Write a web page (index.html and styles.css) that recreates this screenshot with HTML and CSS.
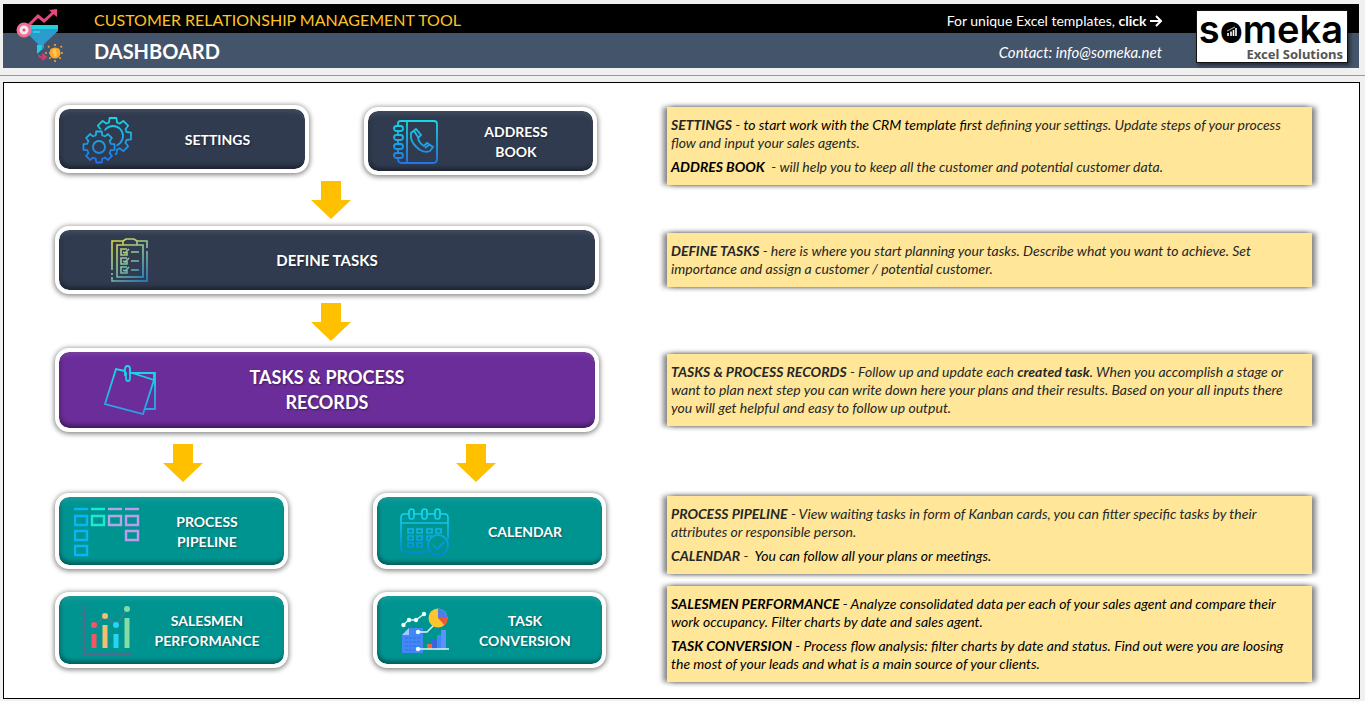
FILE: index.html
```html
<!DOCTYPE html>
<html lang="en">
<head>
<meta charset="utf-8">
<meta name="viewport" content="width=device-width, initial-scale=1">
<title>Customer Relationship Management Tool - Dashboard</title>
<link rel="stylesheet" href="styles.css">
</head>
<body>
<header class="banner">
  <div class="emblem">
    <svg width="50" height="54" viewBox="0 0 50 54" aria-hidden="true">
      <path d="M13 16L22 7l6 5 10-9" fill="none" stroke="#e5487a" stroke-width="3"/>
      <path d="M33 1l8-1 0 8z" fill="#e5487a"/>
      <path d="M9 17h33v5L28 35v4l-6 5V35L9 22z" fill="#2b9ccb"/>
      <path d="M9 16h33v4H9z" fill="#22cfdc"/>
      <path d="M21 36h5v4l-5 5z" fill="#22cfdc"/>
      <path d="M17 23h7" stroke="#22cfdc" stroke-width="2"/>
      <circle cx="8" cy="21" r="6" fill="#f3e6ef" stroke="#ef6f94" stroke-width="3"/>
      <circle cx="8" cy="21" r="1.5" fill="#e5487a"/>
      <path d="M23 46q0 3 5 2m-2-3l4 3-4 3" fill="none" stroke="#d83a70" stroke-width="2"/>
      <g stroke="#f5a43a" stroke-width="1.600" stroke-dasharray="2 2"><path d="M39 35v19M29 44h20M32 37l14 14M46 37L32 51"/></g>
      <circle cx="39" cy="44" r="5.500" fill="#ffa733"/>
      <path d="M40 41.500h-2v2.500h2v2.500h-2" fill="none" stroke="#ffd94f" stroke-width="1.300"/>
    </svg>
  </div>
  <p class="product">CUSTOMER RELATIONSHIP MANAGEMENT TOOL</p>
  <h1 class="title">DASHBOARD</h1>
  <p class="promo">For unique Excel templates, <a href="#templates">click
    <svg width="12" height="12" viewBox="0 0 12 12" aria-hidden="true"><path d="M0 6h11M6 1l5 5-5 5" fill="none" stroke="#fff" stroke-width="2"/></svg></a></p>
  <p class="contact">Contact: <a href="mailto:info@someka.net">info@someka.net</a></p>
  <a class="brand" href="#someka">
    <span class="wordmark">s<span class="ring">o<svg class="bars" viewBox="0 0 18 18" aria-hidden="true"><circle cx="9" cy="9" r="8" fill="#000"/><path d="M5 13v-3M8 13V8.500M10.500 13V7M13 13V5" stroke="#fff" stroke-width="1.600"/><path d="M4 8l8-4" stroke="#fff" stroke-width=".8"/></svg></span>meka</span>
    <span class="tagline">Excel Solutions</span>
  </a>
</header>

<main class="sheet">
  <nav class="flow" aria-label="Process flow">
    <div class="row start">
      <button class="tile navy" type="button">
        <svg class="icon" width="52" height="48" viewBox="-1 -1 52 48" aria-hidden="true">
          <defs>
            <linearGradient id="aqua" gradientUnits="userSpaceOnUse" x1="0" y1="0" x2="0" y2="46"><stop offset="0" stop-color="#19d9e0"/><stop offset="1" stop-color="#2070ea"/></linearGradient>
            <path id="cog" d="M-4.600-11.100L-3.200-11.800-2.800-15.500H2.800L3.200-11.800 4.600-11.100"/>
            <path id="wheel" d="M-5.400-12.900L-4-13.600-3.400-18H3.400L4-13.600 5.400-12.900"/>
            <mask id="gears" maskUnits="userSpaceOnUse" x="-2" y="-2" width="56" height="52">
              <g transform="translate(31 19)" fill="none" stroke="#fff" stroke-width="1.800" stroke-linejoin="round">
                <use href="#wheel"/><use href="#wheel" transform="rotate(45)"/><use href="#wheel" transform="rotate(90)"/><use href="#wheel" transform="rotate(135)"/><use href="#wheel" transform="rotate(180)"/><use href="#wheel" transform="rotate(225)"/><use href="#wheel" transform="rotate(270)"/><use href="#wheel" transform="rotate(315)"/>
                <circle r="10"/>
              </g>
              <circle cx="17" cy="30" r="17.500" fill="#000"/>
              <g transform="translate(17 30)" fill="none" stroke="#fff" stroke-width="1.800" stroke-linejoin="round">
                <use href="#cog"/><use href="#cog" transform="rotate(45)"/><use href="#cog" transform="rotate(90)"/><use href="#cog" transform="rotate(135)"/><use href="#cog" transform="rotate(180)"/><use href="#cog" transform="rotate(225)"/><use href="#cog" transform="rotate(270)"/><use href="#cog" transform="rotate(315)"/>
                <circle r="6"/>
              </g>
            </mask>
          </defs>
          <rect x="-1" y="-1" width="52" height="48" fill="url(#aqua)" mask="url(#gears)"/>
        </svg>
        <span class="label">SETTINGS</span>
      </button>
      <button class="tile navy" type="button">
        <svg class="icon" width="46" height="44" viewBox="0 0 46 44" fill="none" stroke="url(#aqua)" stroke-width="1.800" aria-hidden="true">
          <path d="M5 5V3q0-2 3-2h33q3 0 3 3v35q0 4-4 4H9q-4 0-4-4M14 1v42M5 12v3M5 21v3M5 30v3"/>
          <rect x="1" y="6" width="9" height="5" rx="2.500"/><rect x="1" y="15" width="9" height="5" rx="2.500"/><rect x="1" y="24" width="9" height="5" rx="2.500"/><rect x="1" y="33" width="9" height="5" rx="2.500"/>
          <path d="M18 13l5-4 5 6-3 3q1 5 6 8l3-3 6 4-3 4q-5 2-10-1Q19 24 18 18zM21 11l4 6M32 28l4-3"/>
        </svg>
        <span class="label">ADDRESS<br>BOOK</span>
      </button>
    </div>
    <div class="links first"><svg class="arrow" viewBox="0 0 40 38" aria-hidden="true"><path d="M10 0h20v19h10L20 38 0 19h10z"/></svg></div>
    <button class="tile wide navy" type="button">
      <svg class="icon" width="38" height="44" viewBox="0 0 38 44" fill="none" stroke="url(#meadow)" stroke-width="1.600" aria-hidden="true">
        <defs><linearGradient id="meadow" gradientUnits="userSpaceOnUse" x1="0" y1="0" x2="34" y2="44"><stop offset="0" stop-color="#e5d93b"/><stop offset=".5" stop-color="#8dc6a0"/><stop offset="1" stop-color="#2387d8"/></linearGradient></defs>
        <path d="M12 3H1v29M1 35v2M1 39v4h35V13M36 10V3H26M12 7V3l3-2h8l3 2v4zM12 7H6v32h26V7h-6"/>
        <path d="M16 11h-6v6h6v-3M16 20h-6v6h6v-3M16 29h-6v6h6v-3M12 14l2 1 4-4M12 23l2 1 4-4M12 32l2 1 4-4M20 14h8M20 23h8M20 32h8"/>
      </svg>
      <span class="label">DEFINE TASKS</span>
    </button>
    <div class="links second"><svg class="arrow" viewBox="0 0 40 38" aria-hidden="true"><path d="M10 0h20v19h10L20 38 0 19h10z"/></svg></div>
    <button class="tile wide tall purple" type="button">
      <svg class="icon" width="52" height="50" viewBox="0 0 52 50" fill="none" stroke="url(#paper)" stroke-width="1.800" aria-hidden="true">
        <defs><linearGradient id="paper" gradientUnits="userSpaceOnUse" x1="0" y1="0" x2="0" y2="50"><stop offset="0" stop-color="#14e0e4"/><stop offset="1" stop-color="#2a9be8"/></linearGradient></defs>
        <path d="M21 6L12 4 1 39l38 10 11-34-25-8M26 8h25v36H41M50 15v-7"/>
        <path d="M21 11V4q0-3 2.500-3T26 4v9q0 3-2 3t-2-3V7"/>
      </svg>
      <span class="label">TASKS &amp; PROCESS<br>RECORDS</span>
    </button>
    <div class="links pair">
      <svg class="arrow" viewBox="0 0 40 38" aria-hidden="true"><path d="M10 0h20v19h10L20 38 0 19h10z"/></svg>
      <svg class="arrow" viewBox="0 0 40 38" aria-hidden="true"><path d="M10 0h20v19h10L20 38 0 19h10z"/></svg>
    </div>
    <div class="row outputs">
      <button class="tile teal" type="button">
        <svg class="icon" width="66" height="50" viewBox="0 0 66 50" fill="none" stroke-width="2.400" aria-hidden="true">
          <g stroke="#08b5f5"><path d="M0 2h14"/><path d="M1 9h12v9H1zM1 24h12v9H1zM1 39h12v9H1z"/></g>
          <g stroke="#1fe8d0"><path d="M17 2h14"/><path d="M18 9h12v9H18z"/></g>
          <g stroke="#b3a6e4"><path d="M34 2h14"/><path d="M35 9h12v9H35z"/></g>
          <g stroke="#c09aec"><path d="M51 2h14"/><path d="M52 9h12v9H52zM52 24h12v9H52z"/></g>
        </svg>
        <span class="label">PROCESS<br>PIPELINE</span>
      </button>
      <button class="tile teal" type="button">
        <svg class="icon" width="50" height="48" viewBox="0 0 50 48" fill="none" stroke="url(#sky)" stroke-width="1.700" aria-hidden="true">
          <defs><linearGradient id="sky" gradientUnits="userSpaceOnUse" x1="0" y1="0" x2="0" y2="48"><stop offset="0" stop-color="#16e0f0"/><stop offset="1" stop-color="#0880dc"/></linearGradient></defs>
          <path d="M9 6H4Q1 6 1 10v30q0 4 4 4h23M14 6h8M27 6h8M40 6h5q3 0 3 4v21M1 15h47"/>
          <rect x="9" y="1" width="5" height="10" rx="2.500"/><rect x="22" y="1" width="5" height="10" rx="2.500"/><rect x="35" y="1" width="5" height="10" rx="2.500"/>
          <path d="M8 21h5v4H8zM17 21h5v4h-5zM27 21h5v4h-5zM36 21h5v4h-5zM8 28h5v4H8zM17 28h5v4h-5zM8 35h5v4H8zM17 35h5v4h-5zM29 32h-2v-4h5v1"/>
          <circle cx="38" cy="37" r="10"/><path d="M33 37l4 4 7-7"/>
        </svg>
        <span class="label">CALENDAR</span>
      </button>
      <button class="tile teal" type="button">
        <svg class="icon" width="50" height="52" viewBox="0 0 50 52" fill="none" aria-hidden="true">
          <path d="M2 1v48h48" stroke="#4c6e8c" stroke-width="2.500"/>
          <path d="M12 20l11-9 11 9L45 4" stroke="#54798d" stroke-width="1.200"/>
          <g stroke-width="5"><path d="M12 29v14" stroke="#fb5264"/><path d="M23 20v23" stroke="#f6bd72"/><path d="M34 29v14" stroke="#25d5f8"/><path d="M45 13v30" stroke="#81dda5"/></g>
          <circle cx="12" cy="20" r="3" fill="#fb5264"/><circle cx="23" cy="11" r="3" fill="#f6bd72"/><circle cx="34" cy="20" r="3" fill="#25d5f8"/><circle cx="45" cy="4" r="3" fill="#81dda5"/>
        </svg>
        <span class="label">SALESMEN<br>PERFORMANCE</span>
      </button>
      <button class="tile teal" type="button">
        <svg class="icon" width="48" height="46" viewBox="0 0 48 46" aria-hidden="true">
          <path d="M8 20h14v25H1V27z" fill="#4387f7"/><path d="M1 27l7-7v7z" fill="#a5c8ff"/>
          <path d="M4 30h15M4 34h15M4 38h15M4 42h10" stroke="#2f70e0" stroke-dasharray="3 1"/>
          <path d="M26 36h5v5h-5z" fill="#f0663f"/><path d="M31 32h5v9h-5z" fill="#3767df"/><path d="M36 27h4v14h-4z" fill="#4387f7"/><path d="M40 22h5v19h-5z" fill="#5d91ff"/>
          <path d="M2 17l6-5h7l8-6M16 24h10l7-7M17 41h31" fill="none" stroke="#d9f7f5" stroke-width="1.500"/>
          <g fill="#e8fffb"><circle cx="2.500" cy="17" r="2.200"/><circle cx="8" cy="12" r="2.200"/><circle cx="15" cy="12" r="2.200"/><circle cx="23" cy="6" r="2.200"/><circle cx="17" cy="24" r="2.200"/><circle cx="17" cy="41" r="2.200"/></g>
          <circle cx="37" cy="10" r="9.500" fill="#fdc52f"/><path d="M37 10V.5a9.500 9.500 0 0 1 9.500 9.500z" fill="#4b7fee"/><path d="M37 10h9.500a9.500 9.500 0 0 1-3 7z" fill="#f0592f"/>
        </svg>
        <span class="label">TASK<br>CONVERSION</span>
      </button>
    </div>
  </nav>

  <div class="notes">
    <section class="note">
      <p><b>SETTINGS</b> - <span class="ink">to start work with the CRM template first</span> defining your settings. Update steps of your process<br>flow and input your sales agents.</p>
      <p><b class="ink">ADDRES BOOK</b>&nbsp; - will help you to keep all the customer and potential customer data.</p>
    </section>
    <section class="note define">
      <p><b>DEFINE TASKS</b> - here is where you start planning your tasks. Describe what you want to achieve. Set<br>importance and assign a customer / potential customer.</p>
    </section>
    <section class="note records">
      <p><b>TASKS &amp; PROCESS RECORDS</b> - Follow up and update each <b>created task</b>. When you accomplish a stage or<br>want to plan next step you can write down here your plans and their results. Based on your all inputs there<br>you will get helpful and easy to follow up output.</p>
    </section>
    <section class="note pipeline">
      <p><b>PROCESS PIPELINE</b> - View waiting tasks in form of Kanban cards, you can fitter specific tasks by their<br>attributes or responsible person.</p>
      <p><b>CALENDAR</b> -&nbsp; <span class="ink">You can follow all your plans or meetings.</span></p>
    </section>
    <section class="note reports">
      <p class="ink"><b>SALESMEN PERFORMANCE</b> - Analyze consolidated data per each of your sales agent and compare their<br>work occupancy. Filter charts by date and sales agent.</p>
      <p class="ink"><b>TASK CONVERSION</b> - Process flow analysis: filter charts by date and status. Find out were you are loosing<br>the most of your leads and what is a main source of your clients.</p>
    </section>
  </div>
</main>
</body>
</html>
```

FILE: styles.css
```css
* {
  box-sizing: border-box;
}

body {
  margin: 0;
  background: #f1f0f0;
  font-family: Lato, "Liberation Sans", sans-serif;
  color: #262626;
}

p,
h1 {
  margin: 0;
}

.banner {
  display: grid;
  grid-template-columns: 78px 1fr auto 152px;
  grid-template-rows: 29px 35px;
  align-items: center;
  margin: 4px 6px 0 3px;
  padding: 0 11px 0 13px;
  background: linear-gradient(#000 29px, #44546a 29px);
  color: #fff;
}

.banner a {
  color: inherit;
  text-decoration: none;
}

.emblem {
  grid-row: 1 / 3;
  display: flex;
}

.product {
  grid-area: 1 / 2;
  padding-top: 3px;
  font-size: 16px;
  line-height: 20px;
  color: #ffc325;
}

.title {
  grid-area: 2 / 2;
  font-size: 20px;
  line-height: 24px;
}

.promo,
.contact {
  grid-column: 3;
  margin-right: 34px;
  font-size: 14px;
  line-height: 18px;
  text-align: right;
}

.promo {
  grid-row: 1;
  padding-top: 5px;
}

.promo a {
  font-weight: bold;
}

.promo svg {
  vertical-align: -1px;
}

.contact {
  grid-row: 2;
  padding-top: 2px;
  font-size: 15px;
  font-style: italic;
}

.brand {
  grid-area: 1 / 4 / 3 / 5;
  display: flex;
  flex-direction: column;
  align-items: flex-end;
  height: 53px;
  padding: 0 4px 0 0;
  background: #fff;
  border: 1px solid #111;
  box-shadow: 2px 2px 4px #0008;
  white-space: nowrap;
}

.banner .wordmark {
  font: 600 38px/36px Inter, sans-serif;
  color: #000;
}

.ring {
  position: relative;
}

.bars {
  position: absolute;
  left: 3px;
  top: 17px;
  width: 18px;
  height: 18px;
}

.tagline {
  font: bold 13px/14px "Noto Sans", sans-serif;
  color: #555;
}

.sheet {
  display: grid;
  grid-template-columns: 551fr 645fr;
  column-gap: 61px;
  margin: 14px 5px 2px 3px;
  padding: 22px 47px 16px 51px;
  background: #fff;
  border: 1px solid #000;
  position: relative;
}

.sheet::before {
  content: "";
  position: absolute;
  left: -4px;
  right: -6px;
  top: -8px;
  border-top: 1px solid #999;
}

.row {
  display: grid;
}

.start {
  grid-template-columns: 254fr 233fr;
  column-gap: 55px;
  height: 70px;
  margin-right: 9px;
}

.start .tile:last-child {
  align-self: end;
}

.outputs {
  grid-template-columns: 233fr 233fr;
  gap: 23px 85px;
}

.tile {
  display: grid;
  grid-template-columns: 82px 1fr;
  align-items: center;
  height: 68px;
  padding: 1px 18px 0 7px;
  border: 4px solid #fff;
  border-radius: 14px;
  background-clip: padding-box;
  box-shadow: 0 1px 5px 1px #0007, inset 0 3px 4px #ffffff18, inset 1px -3px 4px #0006;
  font: bold 14px/20px Lato, sans-serif;
  color: #fff;
  text-align: center;
  text-shadow: 1px 1px 2px #0006;
  cursor: pointer;
}

.outputs .tile {
  height: 76px;
}

.wide {
  grid-template-columns: 142px 1fr 142px;
  width: calc(100% - 7px);
  padding: 0;
  font-size: 15px;
}

.tall {
  height: 84px;
  font-size: 18px;
  line-height: 25px;
}

.icon {
  justify-self: center;
}

.navy {
  background-color: #303b4f;
}

.purple {
  background-color: #6b2d99;
}

.teal {
  background-color: #009491;
}

.links {
  display: flex;
  justify-content: center;
}

.first {
  padding: 6px 0 7px;
}

.second {
  padding: 9px 0 7px;
}

.pair {
  justify-content: space-between;
  padding: 12px 110px 11px 108px;
}

.arrow {
  width: 40px;
  height: 38px;
  fill: #ffc000;
}

.notes {
  padding-top: 2px;
}

.note {
  padding: 9px 4px;
  background: #ffe699;
  box-shadow: 4px 0 5px #0007, -4px 0 5px #0007;
  font-size: 14px;
  line-height: 18px;
  font-style: italic;
}

.note p + p {
  margin-top: 6px;
}

.ink {
  color: #000;
}

.define {
  margin-top: 48px;
}

.records {
  margin-top: 67px;
}

.pipeline {
  margin-top: 70px;
}

.reports {
  margin-top: 12px;
}
```
